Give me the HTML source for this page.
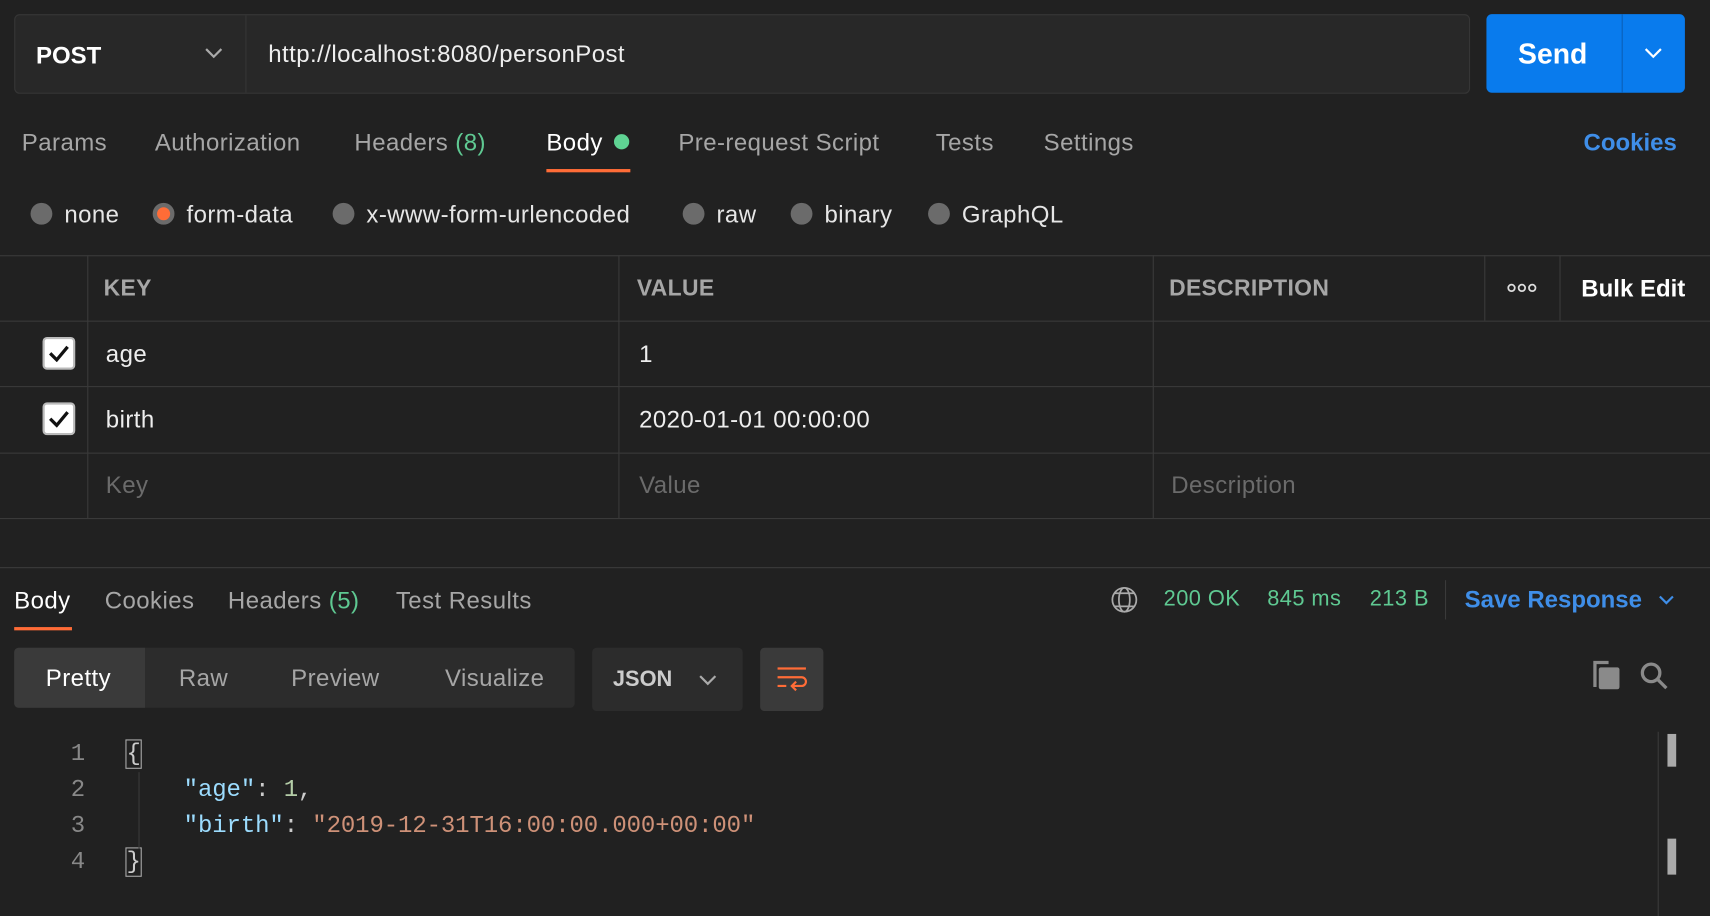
<!DOCTYPE html><html><head><style>
body{margin:0;background:#212121;width:1710px;height:916px;overflow:hidden;font-family:"Liberation Sans",sans-serif}
#w{position:absolute;left:0;top:0;width:1568px;height:840px;transform:scale(1.09056);transform-origin:0 0;color:#e6e6e6}
.a{position:absolute;white-space:nowrap}
.t{font-size:22px;letter-spacing:0.4px;color:#a6a6a6}
.r{position:absolute;width:20px;height:20px;border-radius:50%;background:#6b6b6b;top:186px}
.hl{position:absolute;left:0;width:1568px;height:1px;background:#3a3a3a}
.vl{position:absolute;width:1px;background:#3a3a3a;top:234px;height:241px}
.cb{position:absolute;left:39px;width:30px;height:30px;border:2px solid #bbb;border-radius:4px;background:#fff;box-sizing:border-box}
.h{font-size:21px;letter-spacing:0.3px;color:#a6a6a6;font-weight:bold}
.m{font-family:"Liberation Mono",monospace;font-size:22px;letter-spacing:-0.1px}
</style></head><body><div id="w">
<div class="a" style="left:13px;top:13px;width:1333px;height:71px;border:1px solid #363636;border-radius:5px;background:#282828"></div>
<div class="a" style="left:225px;top:14px;width:1px;height:71px;background:#363636"></div>
<div class="a" style="left:33px;top:38px;font-size:22px;font-weight:bold;color:#fff">POST</div>
<svg class="a" style="left:187px;top:43px" width="18" height="12"><path d="M2 2l7 7 7-7" stroke="#aaa" stroke-width="2" fill="none"/></svg>
<div class="a" style="left:246px;top:37px;font-size:22px;letter-spacing:0.4px;color:#eee">http://localhost:8080/personPost</div>
<div class="a" style="left:1363px;top:13px;width:182px;height:72px;background:#097bed;border-radius:5px"></div>
<div class="a" style="left:1487px;top:13px;width:1px;height:72px;background:#0a5fb8"></div>
<div class="a" style="left:1392px;top:34px;font-size:26px;font-weight:bold;color:#fff">Send</div>
<svg class="a" style="left:1507px;top:43px" width="18" height="12"><path d="M2 2l7 7 7-7" stroke="#fff" stroke-width="2" fill="none"/></svg>
<div class="a t" style="left:20px;top:118px">Params</div>
<div class="a t" style="left:142px;top:118px">Authorization</div>
<div class="a t" style="left:325px;top:118px">Headers <span style="color:#5fc992">(8)</span></div>
<div class="a t" style="left:501px;top:118px;color:#fff">Body</div>
<div class="a" style="left:563px;top:123px;width:14px;height:14px;border-radius:50%;background:#5fd393"></div>
<div class="a" style="left:501px;top:155px;width:77px;height:3px;background:#ff6c37"></div>
<div class="a t" style="left:622px;top:118px">Pre-request Script</div>
<div class="a t" style="left:858px;top:118px">Tests</div>
<div class="a t" style="left:957px;top:118px">Settings</div>
<div class="a" style="left:1452px;top:118px;font-size:22px;color:#3f8ee8;font-weight:bold">Cookies</div>
<div class="r" style="left:28px"></div><div class="a t" style="left:59px;top:184px;color:#e6e6e6">none</div>
<div class="r" style="left:140px;background:#ff6c37;border:4px solid #6b6b6b;width:12px;height:12px"></div><div class="a t" style="left:171px;top:184px;color:#e6e6e6">form-data</div>
<div class="r" style="left:305px"></div><div class="a t" style="left:336px;top:184px;color:#e6e6e6">x-www-form-urlencoded</div>
<div class="r" style="left:626px"></div><div class="a t" style="left:657px;top:184px;color:#e6e6e6">raw</div>
<div class="r" style="left:725px"></div><div class="a t" style="left:756px;top:184px;color:#e6e6e6">binary</div>
<div class="r" style="left:851px"></div><div class="a t" style="left:882px;top:184px;color:#e6e6e6">GraphQL</div>
<div class="hl" style="top:234px"></div><div class="hl" style="top:294px"></div><div class="hl" style="top:354px"></div><div class="hl" style="top:415px"></div><div class="hl" style="top:475px"></div>
<div class="vl" style="left:80px"></div><div class="vl" style="left:567px"></div><div class="vl" style="left:1057px"></div>
<div class="vl" style="left:1361px;height:60px"></div><div class="vl" style="left:1430px;height:60px"></div>
<div class="a h" style="left:95px;top:253px">KEY</div>
<div class="a h" style="left:584px;top:253px">VALUE</div>
<div class="a h" style="left:1072px;top:253px">DESCRIPTION</div>
<svg class="a" style="left:1382px;top:259px" width="28" height="10"><g stroke="#ddd" stroke-width="1.6" fill="none"><circle cx="4" cy="5" r="3"/><circle cx="13.5" cy="5" r="3"/><circle cx="23" cy="5" r="3"/></g></svg>
<div class="a" style="left:1450px;top:252px;font-size:22px;font-weight:bold;color:#fff">Bulk Edit</div>
<div class="cb" style="top:309px"></div><svg class="a" style="left:44px;top:316px" width="20" height="16"><path d="M2 8l6 6 10-12" stroke="#111" stroke-width="3" fill="none"/></svg>
<div class="cb" style="top:369px"></div><svg class="a" style="left:44px;top:376px" width="20" height="16"><path d="M2 8l6 6 10-12" stroke="#111" stroke-width="3" fill="none"/></svg>
<div class="a t" style="left:97px;top:312px;color:#eee">age</div>
<div class="a t" style="left:586px;top:312px;color:#eee">1</div>
<div class="a t" style="left:97px;top:372px;color:#eee">birth</div>
<div class="a t" style="left:586px;top:372px;color:#eee">2020-01-01 00:00:00</div>
<div class="a t" style="left:97px;top:432px;color:#6b6b6b">Key</div>
<div class="a t" style="left:586px;top:432px;color:#6b6b6b">Value</div>
<div class="a t" style="left:1074px;top:432px;color:#6b6b6b">Description</div>
<div class="hl" style="top:520px"></div>
<div class="a t" style="left:13px;top:538px;color:#fff">Body</div>
<div class="a" style="left:13px;top:575px;width:53px;height:3px;background:#ff6c37"></div>
<div class="a t" style="left:96px;top:538px">Cookies</div>
<div class="a t" style="left:209px;top:538px">Headers <span style="color:#5fc992">(5)</span></div>
<div class="a t" style="left:363px;top:538px">Test Results</div>
<svg class="a" style="left:1018px;top:537px" width="26" height="26"><g stroke="#aaa" stroke-width="1.6" fill="none"><circle cx="13" cy="13" r="11"/><ellipse cx="13" cy="13" rx="5" ry="11"/><path d="M4 7h18M4 19h18"/></g></svg>
<div class="a" style="left:1067px;top:538px;font-size:20px;letter-spacing:0.4px;color:#5fc992">200 OK</div>
<div class="a" style="left:1162px;top:538px;font-size:20px;letter-spacing:0.4px;color:#5fc992">845 ms</div>
<div class="a" style="left:1256px;top:538px;font-size:20px;letter-spacing:0.4px;color:#5fc992">213 B</div>
<div class="a" style="left:1325px;top:532px;width:1px;height:36px;background:#3a3a3a"></div>
<div class="a" style="left:1343px;top:537px;font-size:22px;font-weight:bold;color:#3f8ee8">Save Response</div>
<svg class="a" style="left:1520px;top:545px" width="16" height="10"><path d="M2 2l6 6 6-6" stroke="#3f8ee8" stroke-width="2" fill="none"/></svg>
<div class="a" style="left:13px;top:594px;width:514px;height:55px;background:#2c2c2c;border-radius:4px"></div>
<div class="a" style="left:13px;top:594px;width:120px;height:55px;background:#3a3a3a;border-radius:4px 0 0 4px"></div>
<div class="a t" style="left:42px;top:609px;color:#fff">Pretty</div>
<div class="a t" style="left:164px;top:609px">Raw</div>
<div class="a t" style="left:267px;top:609px">Preview</div>
<div class="a t" style="left:408px;top:609px">Visualize</div>
<div class="a" style="left:543px;top:594px;width:138px;height:58px;background:#2c2c2c;border-radius:4px"></div>
<div class="a" style="left:562px;top:612px;font-size:20px;font-weight:bold;color:#ccc">JSON</div>
<svg class="a" style="left:640px;top:618px" width="18" height="12"><path d="M2 2l7 7 7-7" stroke="#aaa" stroke-width="2" fill="none"/></svg>
<div class="a" style="left:697px;top:594px;width:58px;height:58px;background:#3a3a3a;border-radius:4px"></div>
<svg class="a" style="left:711px;top:609px" width="30" height="28"><g stroke="#ff6c37" stroke-width="2" fill="none"><path d="M2 4h26M2 12h22a4 4 0 010 8h-8M2 20h8M19 16l-4 4 4 4"/></g></svg>
<svg class="a" style="left:1458px;top:604px" width="30" height="30"><path d="M3 2h14v3H6v21H3z" fill="#8a8a8a"/><rect x="8" y="8" width="19" height="20" rx="2" fill="#8a8a8a"/></svg>
<svg class="a" style="left:1503px;top:606px" width="28" height="28"><g stroke="#8a8a8a" stroke-width="3" fill="none"><circle cx="11" cy="11" r="8"/><path d="M17 17l8 8"/></g></svg>
<div class="a" style="left:1520px;top:671px;width:1px;height:169px;background:#3a3a3a"></div>
<div class="a" style="left:1529px;top:673px;width:8px;height:30px;background:#aaa"></div>
<div class="a" style="left:1529px;top:769px;width:8px;height:33px;background:#aaa"></div>
<div class="a m" style="left:64px;top:675px;color:#888;line-height:33px;text-align:right;width:14px">1<br>2<br>3<br>4</div>
<div class="a m" style="left:116px;top:675px;line-height:33px;color:#ccc"><span style="outline:1px solid #aaa">{</span><br>&nbsp;&nbsp;&nbsp;&nbsp;<span style="color:#9cdcfe">"age"</span>: <span style="color:#b5cea8">1</span>,<br>&nbsp;&nbsp;&nbsp;&nbsp;<span style="color:#9cdcfe">"birth"</span>: <span style="color:#ce9178">"2019-12-31T16:00:00.000+00:00"</span><br><span style="outline:1px solid #aaa">}</span></div>
<div class="a" style="left:127px;top:708px;width:1px;height:70px;background:#3a3a3a"></div>
</div></body></html>
